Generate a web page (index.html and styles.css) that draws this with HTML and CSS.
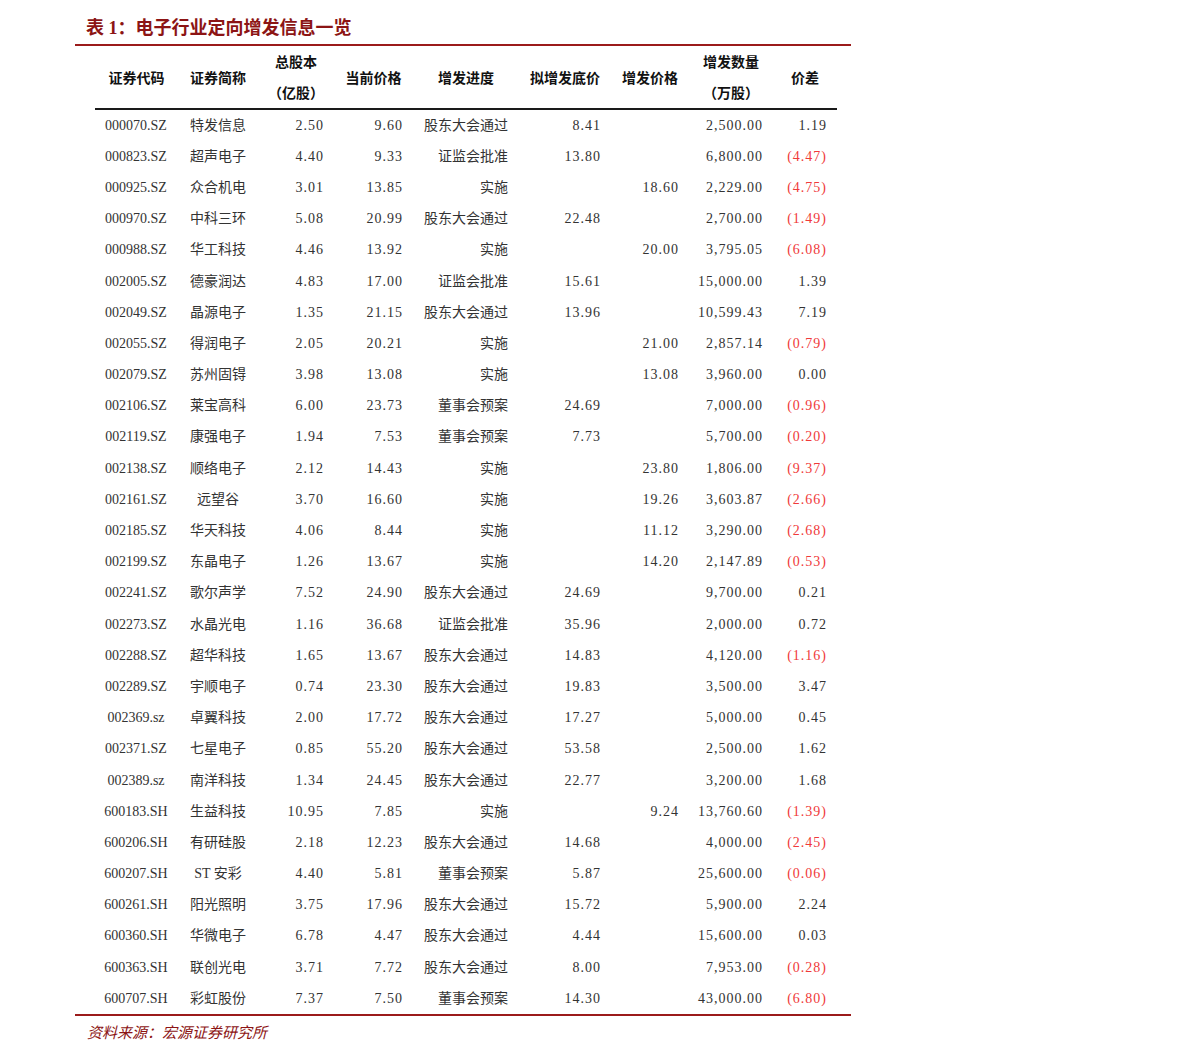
FILE: index.html
```html
<!DOCTYPE html>
<html lang="zh">
<head>
<meta charset="utf-8">
<title>电子行业定向增发信息一览</title>
<link rel="stylesheet" href="styles.css">
</head>
<body>
<div class="page">
  <h1 class="title">表 1：电子行业定向增发信息一览</h1>
  <div class="table-wrap">
    <table class="data">
      <colgroup>
        <col class="c1"><col class="c2"><col class="c3"><col class="c4"><col class="c5"><col class="c6"><col class="c7"><col class="c8"><col class="c9">
      </colgroup>
      <thead>
        <tr>
          <th>证券代码</th>
          <th>证券简称</th>
          <th>总股本<br>（亿股）</th>
          <th>当前价格</th>
          <th>增发进度</th>
          <th>拟增发底价</th>
          <th>增发价格</th>
          <th>增发数量<br>（万股）</th>
          <th>价差</th>
        </tr>
      </thead>
      <tbody>
        <tr><td class="code">000070.SZ</td><td class="name">特发信息</td><td class="num">2.50</td><td class="num">9.60</td><td class="stage">股东大会通过</td><td class="num">8.41</td><td class="num"></td><td class="num">2,500.00</td><td class="num">1.19</td></tr>
        <tr><td class="code">000823.SZ</td><td class="name">超声电子</td><td class="num">4.40</td><td class="num">9.33</td><td class="stage">证监会批准</td><td class="num">13.80</td><td class="num"></td><td class="num">6,800.00</td><td class="num neg">(4.47)</td></tr>
        <tr><td class="code">000925.SZ</td><td class="name">众合机电</td><td class="num">3.01</td><td class="num">13.85</td><td class="stage">实施</td><td class="num"></td><td class="num">18.60</td><td class="num">2,229.00</td><td class="num neg">(4.75)</td></tr>
        <tr><td class="code">000970.SZ</td><td class="name">中科三环</td><td class="num">5.08</td><td class="num">20.99</td><td class="stage">股东大会通过</td><td class="num">22.48</td><td class="num"></td><td class="num">2,700.00</td><td class="num neg">(1.49)</td></tr>
        <tr><td class="code">000988.SZ</td><td class="name">华工科技</td><td class="num">4.46</td><td class="num">13.92</td><td class="stage">实施</td><td class="num"></td><td class="num">20.00</td><td class="num">3,795.05</td><td class="num neg">(6.08)</td></tr>
        <tr><td class="code">002005.SZ</td><td class="name">德豪润达</td><td class="num">4.83</td><td class="num">17.00</td><td class="stage">证监会批准</td><td class="num">15.61</td><td class="num"></td><td class="num">15,000.00</td><td class="num">1.39</td></tr>
        <tr><td class="code">002049.SZ</td><td class="name">晶源电子</td><td class="num">1.35</td><td class="num">21.15</td><td class="stage">股东大会通过</td><td class="num">13.96</td><td class="num"></td><td class="num">10,599.43</td><td class="num">7.19</td></tr>
        <tr><td class="code">002055.SZ</td><td class="name">得润电子</td><td class="num">2.05</td><td class="num">20.21</td><td class="stage">实施</td><td class="num"></td><td class="num">21.00</td><td class="num">2,857.14</td><td class="num neg">(0.79)</td></tr>
        <tr><td class="code">002079.SZ</td><td class="name">苏州固锝</td><td class="num">3.98</td><td class="num">13.08</td><td class="stage">实施</td><td class="num"></td><td class="num">13.08</td><td class="num">3,960.00</td><td class="num">0.00</td></tr>
        <tr><td class="code">002106.SZ</td><td class="name">莱宝高科</td><td class="num">6.00</td><td class="num">23.73</td><td class="stage">董事会预案</td><td class="num">24.69</td><td class="num"></td><td class="num">7,000.00</td><td class="num neg">(0.96)</td></tr>
        <tr><td class="code">002119.SZ</td><td class="name">康强电子</td><td class="num">1.94</td><td class="num">7.53</td><td class="stage">董事会预案</td><td class="num">7.73</td><td class="num"></td><td class="num">5,700.00</td><td class="num neg">(0.20)</td></tr>
        <tr><td class="code">002138.SZ</td><td class="name">顺络电子</td><td class="num">2.12</td><td class="num">14.43</td><td class="stage">实施</td><td class="num"></td><td class="num">23.80</td><td class="num">1,806.00</td><td class="num neg">(9.37)</td></tr>
        <tr><td class="code">002161.SZ</td><td class="name">远望谷</td><td class="num">3.70</td><td class="num">16.60</td><td class="stage">实施</td><td class="num"></td><td class="num">19.26</td><td class="num">3,603.87</td><td class="num neg">(2.66)</td></tr>
        <tr><td class="code">002185.SZ</td><td class="name">华天科技</td><td class="num">4.06</td><td class="num">8.44</td><td class="stage">实施</td><td class="num"></td><td class="num">11.12</td><td class="num">3,290.00</td><td class="num neg">(2.68)</td></tr>
        <tr><td class="code">002199.SZ</td><td class="name">东晶电子</td><td class="num">1.26</td><td class="num">13.67</td><td class="stage">实施</td><td class="num"></td><td class="num">14.20</td><td class="num">2,147.89</td><td class="num neg">(0.53)</td></tr>
        <tr><td class="code">002241.SZ</td><td class="name">歌尔声学</td><td class="num">7.52</td><td class="num">24.90</td><td class="stage">股东大会通过</td><td class="num">24.69</td><td class="num"></td><td class="num">9,700.00</td><td class="num">0.21</td></tr>
        <tr><td class="code">002273.SZ</td><td class="name">水晶光电</td><td class="num">1.16</td><td class="num">36.68</td><td class="stage">证监会批准</td><td class="num">35.96</td><td class="num"></td><td class="num">2,000.00</td><td class="num">0.72</td></tr>
        <tr><td class="code">002288.SZ</td><td class="name">超华科技</td><td class="num">1.65</td><td class="num">13.67</td><td class="stage">股东大会通过</td><td class="num">14.83</td><td class="num"></td><td class="num">4,120.00</td><td class="num neg">(1.16)</td></tr>
        <tr><td class="code">002289.SZ</td><td class="name">宇顺电子</td><td class="num">0.74</td><td class="num">23.30</td><td class="stage">股东大会通过</td><td class="num">19.83</td><td class="num"></td><td class="num">3,500.00</td><td class="num">3.47</td></tr>
        <tr><td class="code">002369.sz</td><td class="name">卓翼科技</td><td class="num">2.00</td><td class="num">17.72</td><td class="stage">股东大会通过</td><td class="num">17.27</td><td class="num"></td><td class="num">5,000.00</td><td class="num">0.45</td></tr>
        <tr><td class="code">002371.SZ</td><td class="name">七星电子</td><td class="num">0.85</td><td class="num">55.20</td><td class="stage">股东大会通过</td><td class="num">53.58</td><td class="num"></td><td class="num">2,500.00</td><td class="num">1.62</td></tr>
        <tr><td class="code">002389.sz</td><td class="name">南洋科技</td><td class="num">1.34</td><td class="num">24.45</td><td class="stage">股东大会通过</td><td class="num">22.77</td><td class="num"></td><td class="num">3,200.00</td><td class="num">1.68</td></tr>
        <tr><td class="code">600183.SH</td><td class="name">生益科技</td><td class="num">10.95</td><td class="num">7.85</td><td class="stage">实施</td><td class="num"></td><td class="num">9.24</td><td class="num">13,760.60</td><td class="num neg">(1.39)</td></tr>
        <tr><td class="code">600206.SH</td><td class="name">有研硅股</td><td class="num">2.18</td><td class="num">12.23</td><td class="stage">股东大会通过</td><td class="num">14.68</td><td class="num"></td><td class="num">4,000.00</td><td class="num neg">(2.45)</td></tr>
        <tr><td class="code">600207.SH</td><td class="name">ST 安彩</td><td class="num">4.40</td><td class="num">5.81</td><td class="stage">董事会预案</td><td class="num">5.87</td><td class="num"></td><td class="num">25,600.00</td><td class="num neg">(0.06)</td></tr>
        <tr><td class="code">600261.SH</td><td class="name">阳光照明</td><td class="num">3.75</td><td class="num">17.96</td><td class="stage">股东大会通过</td><td class="num">15.72</td><td class="num"></td><td class="num">5,900.00</td><td class="num">2.24</td></tr>
        <tr><td class="code">600360.SH</td><td class="name">华微电子</td><td class="num">6.78</td><td class="num">4.47</td><td class="stage">股东大会通过</td><td class="num">4.44</td><td class="num"></td><td class="num">15,600.00</td><td class="num">0.03</td></tr>
        <tr><td class="code">600363.SH</td><td class="name">联创光电</td><td class="num">3.71</td><td class="num">7.72</td><td class="stage">股东大会通过</td><td class="num">8.00</td><td class="num"></td><td class="num">7,953.00</td><td class="num neg">(0.28)</td></tr>
        <tr><td class="code">600707.SH</td><td class="name">彩虹股份</td><td class="num">7.37</td><td class="num">7.50</td><td class="stage">董事会预案</td><td class="num">14.30</td><td class="num"></td><td class="num">43,000.00</td><td class="num neg">(6.80)</td></tr>
      </tbody>
    </table>
  </div>
  <p class="source">资料来源：宏源证券研究所</p>
</div>
</body>
</html>
```

FILE: styles.css
```css
html, body {
  margin: 0;
  padding: 0;
  background: #ffffff;
}

.page {
  margin-left: 75px;
  width: 776px;
  font-family: "Liberation Serif", "Noto Sans CJK SC", serif;
}

.title {
  margin: 0;
  padding: 16px 0 4px 11px;
  font-size: 18px;
  line-height: 24px;
  font-weight: 700;
  color: #8c1414;
  border-bottom: 2px solid #9b1b1b;
}

.table-wrap {
  padding-left: 20px;
  border-bottom: 2px solid #9b1b1b;
}

.data {
  border-collapse: collapse;
  table-layout: fixed;
  width: 742px;
}

.c1 { width: 83px; }
.c2 { width: 80px; }
.c3 { width: 76px; }
.c4 { width: 79px; }
.c5 { width: 106px; }
.c6 { width: 92px; }
.c7 { width: 78px; }
.c8 { width: 84px; }
.c9 { width: 64px; }

.data th {
  height: 62px;
  padding: 0;
  font-family: "Noto Sans CJK SC", sans-serif;
  font-size: 14px;
  line-height: 31px;
  font-weight: 700;
  color: #111;
  text-align: center;
  vertical-align: middle;
  border-bottom: 2px solid #1a1a1a;
}

.data td {
  height: 31.2px;
  padding: 0;
  font-size: 14px;
  line-height: 20px;
  color: #333;
  white-space: nowrap;
  vertical-align: middle;
}

.data td.code {
  text-align: center;
  padding-right: 1px;
}

.data td.name {
  text-align: center;
  font-family: "Liberation Serif", "Noto Sans CJK SC", serif;
}

.data td.stage {
  text-align: right;
  padding-right: 11px;
}

.data td.num {
  text-align: right;
  padding-right: 10px;
  letter-spacing: 1px;
}

.data td.neg {
  color: #f03a3a;
}

.source {
  margin: 0;
  padding: 6px 0 0 12px;
  font-size: 15px;
  line-height: 20px;
  font-style: italic;
  color: #8c1414;
  font-family: "Noto Sans CJK SC", sans-serif;
}
```
